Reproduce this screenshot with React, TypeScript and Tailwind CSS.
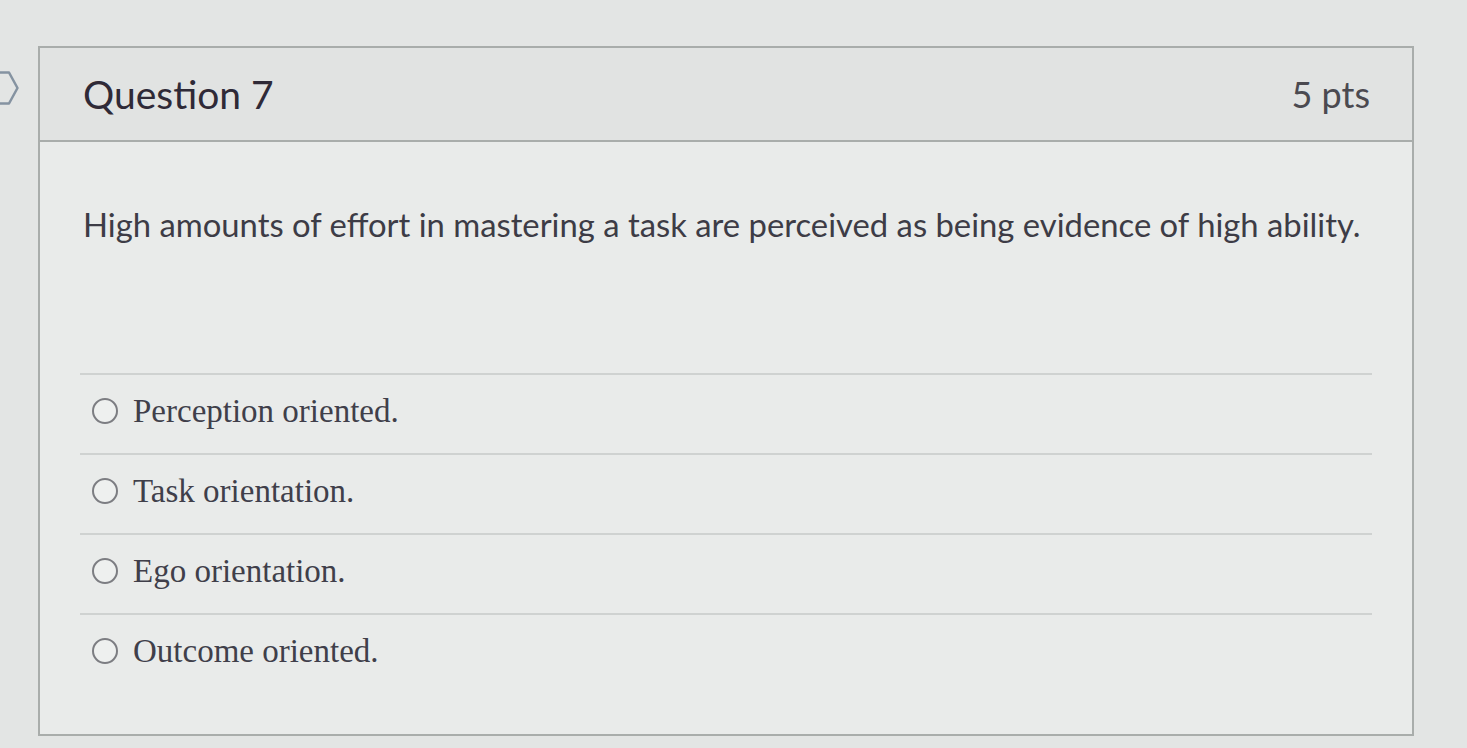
import React from 'react';

const answers = [
  'Perception oriented.',
  'Task orientation.',
  'Ego orientation.',
  'Outcome oriented.',
];

const RadioRow: React.FC<{ label: string }> = ({ label }) => {
  return (
    <label className="flex items-center h-[80px] border-t-2 border-[#cfd2d1] pl-[12px] pb-[6px] cursor-pointer">
      <span className="w-[26px] h-[26px] rounded-full border-2 border-[#7c7d82] bg-[#eef0ef] shrink-0"></span>
      <span
        className="ml-[15px] text-[33px] text-[#403f4a] leading-none"
        style={{ fontFamily: '"Liberation Serif", serif' }}
      >
        {label}
      </span>
    </label>
  );
};

const App: React.FC = () => {
  return (
    <div
      className="w-full h-[748px] bg-[#e3e5e4] overflow-hidden flex items-start pt-[46px]"
      style={{ fontFamily: 'Lato, "Liberation Sans", sans-serif' }}
    >
      {/* collapse arrow on the left edge */}
      <div className="w-[38px] shrink-0 pt-[25px]">
        <svg width="20" height="34" viewBox="0 0 20 34" fill="none">
          <path d="M0 1.5 H9 L17.5 17 L9 32.5 H0" stroke="#8593a1" strokeWidth="2.5" strokeLinejoin="round" />
        </svg>
      </div>

      <div className="w-[1376px] h-[690px] border-2 border-[#a9adab] bg-[#e9ebea] flex flex-col">
        <div className="h-[94px] bg-[#e1e3e2] border-b-2 border-[#a9adab] flex items-center justify-between pl-[43px] pr-[42px]">
          <h2 className="text-[39px] text-[#2f2a37] leading-none">Question 7</h2>
          <span className="text-[36px] text-[#4b4a50] leading-none">5 pts</span>
        </div>

        <div className="px-[40px] pt-[64px]">
          <p className="text-[32.8px] text-[#3d3c46] leading-[38px] pl-[3px]">
            High amounts of effort in mastering a task are perceived as being evidence of high ability.
          </p>

          <div className="mt-[129px]">
            {answers.map((a) => (
              <RadioRow key={a} label={a} />
            ))}
          </div>
        </div>
      </div>
    </div>
  );
};

export default App;
